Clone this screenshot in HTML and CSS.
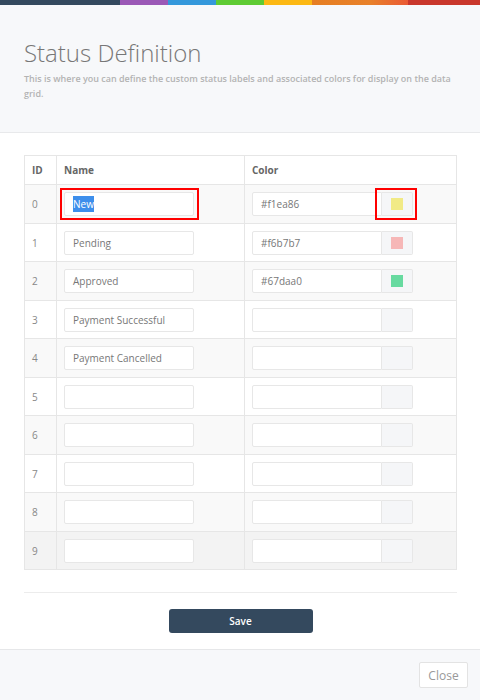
FILE: index.html
```html
<!DOCTYPE html>
<html lang="en">
<head>
<meta charset="utf-8">
<title>Status Definition</title>
<link rel="stylesheet" href="styles.css">
</head>
<body>
<div class="rainbow">
  <span class="seg navy"></span><span class="seg purple"></span><span class="seg blue"></span><span class="seg green"></span><span class="seg yellow"></span><span class="seg orange"></span><span class="seg red"></span>
</div>
<header class="head">
  <h1 class="title">Status Definition</h1>
  <p class="desc">This is where you can define the custom status labels and associated colors for display on the data grid.</p>
</header>
<main class="body">
  <table class="grid">
    <thead>
      <tr><th class="c-id">ID</th><th class="c-name">Name</th><th class="c-color">Color</th></tr>
    </thead>
    <tbody>
      <tr class="alt"><td>0</td><td><div class="field marked"><span class="sel">New</span></div></td><td><div class="color"><div class="field cf">#f1ea86</div><div class="addon marked2"><span class="sw" style="background:#f1ea86"></span></div></div></td></tr>
      <tr><td>1</td><td><div class="field">Pending</div></td><td><div class="color"><div class="field cf">#f6b7b7</div><div class="addon"><span class="sw" style="background:#f6b7b7"></span></div></div></td></tr>
      <tr class="alt"><td>2</td><td><div class="field">Approved</div></td><td><div class="color"><div class="field cf">#67daa0</div><div class="addon"><span class="sw" style="background:#67daa0"></span></div></div></td></tr>
      <tr><td>3</td><td><div class="field">Payment Successful</div></td><td><div class="color"><div class="field cf"></div><div class="addon"></div></div></td></tr>
      <tr class="alt"><td>4</td><td><div class="field">Payment Cancelled</div></td><td><div class="color"><div class="field cf"></div><div class="addon"></div></div></td></tr>
      <tr><td>5</td><td><div class="field"></div></td><td><div class="color"><div class="field cf"></div><div class="addon"></div></div></td></tr>
      <tr class="alt"><td>6</td><td><div class="field"></div></td><td><div class="color"><div class="field cf"></div><div class="addon"></div></div></td></tr>
      <tr><td>7</td><td><div class="field"></div></td><td><div class="color"><div class="field cf"></div><div class="addon"></div></div></td></tr>
      <tr class="alt"><td>8</td><td><div class="field"></div></td><td><div class="color"><div class="field cf"></div><div class="addon"></div></div></td></tr>
      <tr class="hover"><td>9</td><td><div class="field"></div></td><td><div class="color"><div class="field cf"></div><div class="addon"></div></div></td></tr>
    </tbody>
  </table>
  <hr class="sep">
  <div class="actions"><button class="save" type="button">Save</button></div>
</main>
<footer class="foot">
  <button class="close" type="button">Close</button>
</footer>
</body>
</html>
```
FILE: styles.css
```css
* { box-sizing: border-box; }
html, body { margin: 0; padding: 0; }
body {
  width: 480px;
  height: 700px;
  overflow: hidden;
  background: #fff;
  font-family: "Open Sans", "Noto Sans", sans-serif;
  color: #666;
}
.rainbow { display: flex; height: 5px; }
.seg { display: block; height: 5px; }
.navy { width: 120px; background: #34495e; }
.purple { width: 48px; background: #9b59b6; }
.blue { width: 48px; background: #3498db; }
.green { width: 48px; background: #5ecb33; }
.yellow { width: 48px; background: #fcb813; }
.orange { width: 96px; background: linear-gradient(90deg, #e67e22 0%, #e8812a 60%, #ea5a34 100%); }
.red { flex: 1; background: #c9372c; }

.head {
  background: #f7f8fa;
  border-bottom: 1px solid #e8e9eb;
  padding: 34px 24px 28px;
  height: 128px;
}
.title {
  margin: 0;
  font-size: 24px;
  font-weight: 300;
  line-height: 28px;
  color: #777;
}
.desc {
  margin: 4px 0 0;
  font-size: 9px;
  font-weight: 600;
  line-height: 15px;
  color: #b3b3b3;
}

.body { padding: 22px 23px 0 24px; }
.grid {
  width: 433px;
  border-collapse: collapse;
  border: 1px solid #e3e3e3;
  font-size: 10px;
}
.grid th, .grid td {
  border: 1px solid #e6e6e6;
  text-align: left;
  vertical-align: middle;
}
.grid th {
  height: 29px;
  padding: 0 7px;
  font-weight: 700;
  color: #666;
  background: #fff;
}
.c-id { width: 32px; }
.c-name { width: 188px; }
.grid td {
  padding: 7px 7px 6.5px;
  color: #888;
}
.grid tr.alt td { background: #f9f9f9; }
.grid tr.hover td { background: #f3f3f3; }

.field {
  position: relative;
  width: 130px;
  height: 24px;
  border: 1px solid #e7e7e7;
  border-radius: 2px;
  background: #fff;
  padding: 0 8px;
  line-height: 22px;
  font-size: 10px;
  color: #777;
  white-space: nowrap;
}
.sel { background: #3d8eeb; color: #fff; padding: 1px 0; }
.marked::after {
  content: "";
  position: absolute;
  top: -5px; bottom: -5px; left: -5px; right: -6px;
  border: 2px solid #f00;
}

.color { display: flex; }
.cf { border-radius: 2px 0 0 2px; }
.addon {
  position: relative;
  width: 31px;
  height: 24px;
  border: 1px solid #e7e7e7;
  border-left: 0;
  border-radius: 0 2px 2px 0;
  background: #f5f6f8;
  display: flex;
  align-items: center;
  justify-content: center;
}
.sw { display: block; width: 12px; height: 12px; }
.marked2::after {
  content: "";
  position: absolute;
  top: -5px; bottom: -5px; left: -7px; right: -5px;
  border: 2px solid #f00;
}

.sep {
  margin: 22px 0 0;
  border: 0;
  border-top: 1px solid #ececec;
  height: 0;
}
.actions { display: flex; justify-content: center; padding: 16px 0 16px; }
.save {
  width: 144px;
  height: 24px;
  border: 0;
  border-radius: 3px;
  background: #34495e;
  color: #fff;
  font-family: "Open Sans", "Noto Sans", sans-serif;
  font-size: 10px;
  font-weight: 600;
}
.foot {
  background: #f7f8fa;
  border-top: 1px solid #e6e7e9;
  height: 60px;
  display: flex;
  justify-content: flex-end;
  align-items: flex-start;
  padding: 12px 12px 0;
}
.close {
  width: 49px;
  height: 26px;
  background: #fff;
  border: 1px solid #e3e3e3;
  border-radius: 2px;
  color: #999;
  font-family: "Open Sans", "Noto Sans", sans-serif;
  font-size: 12px;
}
```
